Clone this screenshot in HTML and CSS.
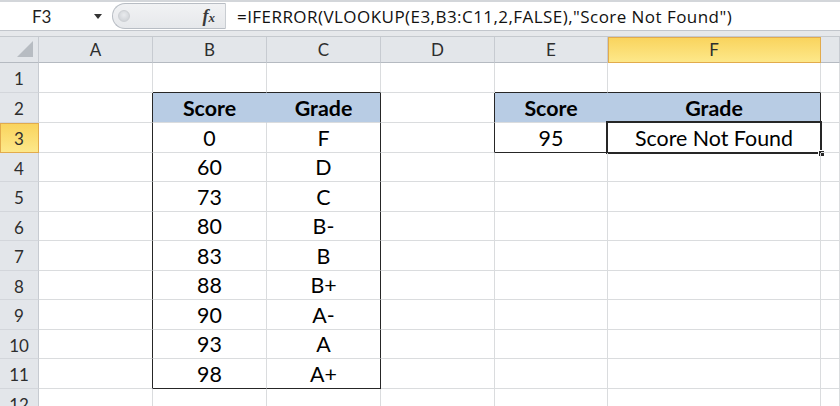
FILE: index.html
```html
<!DOCTYPE html>
<html>
<head>
<meta charset="utf-8">
<link rel="stylesheet" href="styles.css">
</head>
<body>
<div class="app">
  <div class="fbar">
    <div class="namebox"><span class="nb-text">F3</span><span class="nb-arrow"></span></div>
    <div class="fx-ctrl"><span class="knob"></span><span class="fx">f<span class="fx-x">x</span></span></div>
    <div class="formula">=IFERROR(VLOOKUP(E3,B3:C11,2,FALSE),"Score Not Found")</div>
  </div>
  <div class="sep"></div>
  <div class="sheet">
    <div class="ch corner"><span class="tri"></span></div>
    <div class="ch">A</div><div class="ch">B</div><div class="ch">C</div><div class="ch">D</div><div class="ch">E</div><div class="ch sel">F</div><div class="ch"></div>

    <div class="rh">1</div><div class="c"></div><div class="c tb"></div><div class="c tb"></div><div class="c"></div><div class="c tb"></div><div class="c tb"></div><div class="c"></div>

    <div class="rh">2</div><div class="c tr"></div><div class="c hd nr b">Score</div><div class="c hd tr b">Grade</div><div class="c tr"></div><div class="c hd nr b">Score</div><div class="c hd tr b">Grade</div><div class="c"></div>

    <div class="rh sel">3</div><div class="c tr"></div><div class="c">0</div><div class="c tr">F</div><div class="c tr"></div><div class="c tb">95</div><div class="c tb tr active">Score Not Found<span class="selbox"></span><span class="handle"></span></div><div class="c"></div>

    <div class="rh">4</div><div class="c tr"></div><div class="c">60</div><div class="c tr">D</div><div class="c"></div><div class="c"></div><div class="c"></div><div class="c"></div>

    <div class="rh">5</div><div class="c tr"></div><div class="c">73</div><div class="c tr">C</div><div class="c"></div><div class="c"></div><div class="c"></div><div class="c"></div>

    <div class="rh">6</div><div class="c tr"></div><div class="c">80</div><div class="c tr">B-</div><div class="c"></div><div class="c"></div><div class="c"></div><div class="c"></div>

    <div class="rh">7</div><div class="c tr"></div><div class="c">83</div><div class="c tr">B</div><div class="c"></div><div class="c"></div><div class="c"></div><div class="c"></div>

    <div class="rh">8</div><div class="c tr"></div><div class="c">88</div><div class="c tr">B+</div><div class="c"></div><div class="c"></div><div class="c"></div><div class="c"></div>

    <div class="rh">9</div><div class="c tr"></div><div class="c">90</div><div class="c tr">A-</div><div class="c"></div><div class="c"></div><div class="c"></div><div class="c"></div>

    <div class="rh">10</div><div class="c tr"></div><div class="c">93</div><div class="c tr">A</div><div class="c"></div><div class="c"></div><div class="c"></div><div class="c"></div>

    <div class="rh">11</div><div class="c tr"></div><div class="c tb">98</div><div class="c tb tr">A+</div><div class="c"></div><div class="c"></div><div class="c"></div><div class="c"></div>

    <div class="rh">12</div><div class="c"></div><div class="c"></div><div class="c"></div><div class="c"></div><div class="c"></div><div class="c"></div><div class="c"></div>
  </div>
</div>
</body>
</html>
```

FILE: styles.css
```css
* { box-sizing: border-box; }
html, body { margin: 0; padding: 0; background: #fff; }
.app {
  width: 840px;
  height: 406px;
  overflow: hidden;
  font-family: Lato, "Open Sans", sans-serif;
  color: #000;
}

/* formula bar */
.fbar {
  height: 31px;
  display: flex;
  border-top: 2px solid #d3d6da;
  border-bottom: 1px solid #c2c6cc;
  background: #fff;
}
.namebox {
  width: 112px;
  position: relative;
  display: flex;
  align-items: center;
}
.nb-text {
  margin-left: 32px;
  font-size: 17px;
  color: #1f1f1f;
}
.nb-arrow {
  position: absolute;
  left: 94px;
  top: 12px;
  width: 0; height: 0;
  border-left: 4.5px solid transparent;
  border-right: 4.5px solid transparent;
  border-top: 5px solid #333;
}
.fx-ctrl {
  width: 114px;
  margin: 1px 0 1px 0;
  border: 1px solid #b8bdc4;
  border-right: 1px solid #c9cdd2;
  border-radius: 14px 0 0 14px;
  background: linear-gradient(#f1f2f4, #e6e8eb);
  display: flex;
  align-items: center;
  justify-content: space-between;
  padding: 0 10px 0 5px;
}
.knob {
  width: 12px; height: 12px;
  border-radius: 50%;
  background: radial-gradient(circle at 50% 40%, #e9ebee 0, #d3d6da 70%);
  border: 1px solid #cdd0d4;
}
.fx {
  font-family: "Liberation Serif", serif;
  font-style: italic;
  font-weight: bold;
  font-size: 18px;
  color: #3a3a3a;
  line-height: 1;
}
.fx-x { font-size: 13px; }
.formula {
  flex: 1;
  padding-left: 11px;
  display: flex;
  align-items: center;
  font-family: "Open Sans", Lato, sans-serif;
  font-size: 17px;
  letter-spacing: 0.45px;
  color: #111;
  white-space: nowrap;
}
.sep {
  height: 6px;
  background: #e6e8eb;
  border-bottom: 1px solid #c5c9ce;
}

/* sheet grid */
.sheet {
  display: grid;
  grid-template-columns: 39px 114px 114px 114px 114px 113px 213px 1fr;
  grid-template-rows: 26px 30px 30px 30px 29px 30px 29px 30px 29px 30px 29px 30px 30px;
  height: 369px;
  overflow: hidden;
}
.ch, .rh {
  background: #e3e6ea;
  border-right: 1px solid #c7cbd1;
  border-bottom: 1px solid #c7cbd1;
  color: #2e2e2e;
  font-size: 17px;
  display: flex;
  align-items: center;
  justify-content: center;
}
.ch { border-bottom-color: #b5bac1; }
.rh { border-bottom-color: #d3d6db; padding-top: 2px; }
.ch.sel, .rh.sel {
  background: linear-gradient(#f9d35c, #fde88a);
  border-right-color: #e2ab4c;
  border-bottom-color: #e2ab4c;
  box-shadow: inset 1px 1px 0 #e2ab4c;
}
.corner { position: relative; }
.tri {
  position: absolute;
  right: 5px;
  bottom: 5px;
  width: 0; height: 0;
  border-left: 16px solid transparent;
  border-bottom: 16px solid #b7bcc2;
}
.c {
  border-right: 1px solid #dadcde;
  border-bottom: 1px solid #dadcde;
  display: flex;
  align-items: flex-end;
  justify-content: center;
  padding-bottom: 1px;
  font-size: 21.4px;
  line-height: 25px;
  white-space: nowrap;
  position: relative;
}
.b { font-weight: bold; }
.hd { background: #b8cce4; }
.hd.nr { border-right-color: #b8cce4; }
.tr { border-right-color: #262626; }
.tb { border-bottom-color: #262626; }
.selbox {
  position: absolute;
  top: -2px;
  left: -2px;
  right: -2px;
  bottom: -2px;
  border: 2px solid #262626;
}
.handle {
  position: absolute;
  right: -5px;
  bottom: -5px;
  width: 7px;
  height: 7px;
  background: #262626;
  border: 1px solid #fff;
}
```
